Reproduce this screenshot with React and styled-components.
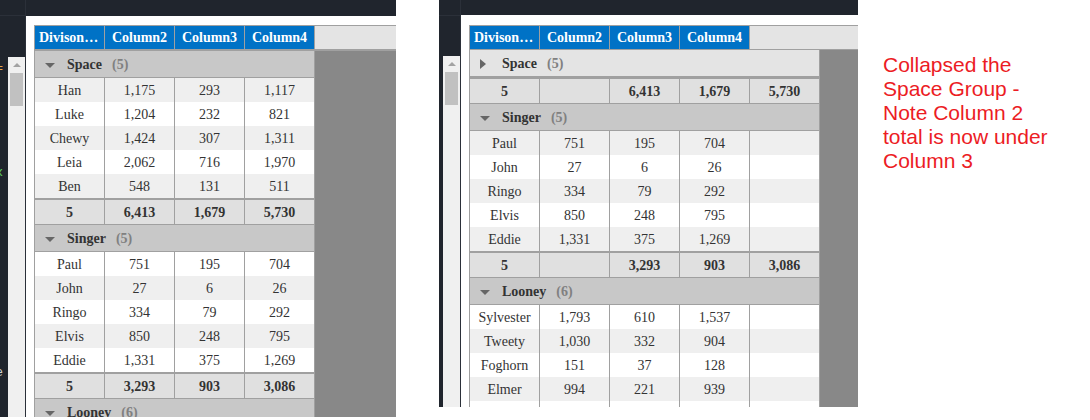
import React from 'react';
import styled, { createGlobalStyle } from 'styled-components';

const Global = createGlobalStyle`
  *, *::before, *::after { box-sizing: border-box; }
  html, body { margin: 0; padding: 0; background: #fff; }
  body {
    width: 1090px;
    height: 420px;
    overflow: hidden;
    font-family: "Liberation Serif", "Times New Roman", serif;
  }
`;

const Page = styled.div`
  display: flex;
  align-items: flex-start;
  height: 420px;
`;

const Shot = styled.div`
  display: flex;
  flex-shrink: 0;
  width: ${(p) => p.$w}px;
  height: ${(p) => p.$h}px;
  margin-right: ${(p) => p.$mr}px;
  overflow: hidden;
`;

const Sidebar = styled.div`
  display: flex;
  flex-direction: column;
  flex-shrink: 0;
  background: #20252d;
  border-right: 1px solid #2b3039;
`;

const SideHead = styled.div`
  height: 16px;
  border-bottom: 1px solid #2b3039;
`;

const SideBody = styled.div`
  flex: 1;
  display: flex;
  min-height: 0;
`;

const CodeStrip = styled.div`
  width: ${(p) => p.$w}px;
  display: flex;
  flex-direction: column;
  overflow: hidden;
  font-family: "Liberation Mono", monospace;
  font-size: 13px;
`;

const CodeLine = styled.div`
  height: 16px;
  line-height: 16px;
  margin-top: ${(p) => p.$gap}px;
  padding-right: 5px;
  display: flex;
  justify-content: flex-end;
  white-space: nowrap;
  color: ${(p) => p.$c};
`;

const ScrollCol = styled.div`
  width: 17px;
  display: flex;
  flex-direction: column;
`;

const ScrollSpacer = styled.div`
  height: ${(p) => p.$h}px;
  flex-shrink: 0;
`;

const Track = styled.div`
  flex: 1;
  background: #f0f0f0;
  display: flex;
  flex-direction: column;
  align-items: center;
  padding-top: 6px;
`;

const TrackArrow = styled.div`
  width: 0;
  height: 0;
  border-left: 4px solid transparent;
  border-right: 4px solid transparent;
  border-bottom: 4px solid #a3a3a3;
`;

const Thumb = styled.div`
  width: 13px;
  height: 33px;
  margin-top: 6px;
  background: #c1c1c1;
`;

const Main = styled.div`
  flex: 1;
  display: flex;
  flex-direction: column;
  min-width: 0;
`;

const TopBar = styled.div`
  height: ${(p) => p.$h}px;
  background: #20252d;
  flex-shrink: 0;
`;

const Content = styled.div`
  flex: 1;
  min-height: 0;
  display: flex;
  flex-direction: column;
  padding: ${(p) => p.$pt}px 0 0 8px;
  background: #fff;
`;

const GridPanel = styled.div`
  flex: 1;
  min-height: 0;
  display: flex;
  flex-direction: column;
  overflow: hidden;
`;

const HeaderBar = styled.div`
  display: flex;
  flex-shrink: 0;
  background: #e4e4e4;
  border-top: 1px solid #a0a0a0;
  border-bottom: ${(p) => p.$bb}px solid #a0a0a0;
`;

const HeaderCells = styled.div`
  display: flex;
  border-left: 1px solid #a0a0a0;
`;

const HeaderCell = styled.div`
  width: 70px;
  height: 23px;
  line-height: 23px;
  padding: 0 4px;
  background: #0072c6;
  color: #fff;
  font-weight: bold;
  font-size: 14px;
  text-align: center;
  white-space: nowrap;
  overflow: hidden;
  text-overflow: ellipsis;
  border-right: 1px solid #a0a0a0;
`;

const Body = styled.div`
  flex: 1;
  min-height: 0;
  display: flex;
  background: #888;
  overflow: hidden;
`;

const Table = styled.div`
  display: flex;
  flex-direction: column;
  flex-shrink: 0;
  border-left: 1px solid #a0a0a0;
`;

const GroupRow = styled.div`
  display: flex;
  align-items: center;
  height: 27px;
  flex-shrink: 0;
  padding: 2px 0 0 10px;
  background: ${(p) => (p.$collapsed ? '#e4e4e4' : '#c8c8c8')};
  border-bottom: 1px solid #a0a0a0;
  border-right: 1px solid #a0a0a0;
  color: #333;
  font-size: 14px;
  font-weight: bold;
`;

const IconBox = styled.div`
  width: 22px;
  display: flex;
  align-items: center;
`;

const ArrowDown = styled.div`
  width: 0;
  height: 0;
  border-left: 5px solid transparent;
  border-right: 5px solid transparent;
  border-top: 5px solid #666;
`;

const ArrowRight = styled.div`
  width: 0;
  height: 0;
  border-top: 5px solid transparent;
  border-bottom: 5px solid transparent;
  border-left: 6px solid #666;
`;

const Count = styled.span`
  margin-left: 10px;
  color: #808080;
`;

const Row = styled.div`
  display: flex;
  flex-shrink: 0;
  background: ${(p) => (p.$total ? '#e0e0e0' : p.$alt ? '#efefef' : '#fff')};
  border-top: ${(p) => (p.$total ? '2px solid #a0a0a0' : 'none')};
  border-bottom: ${(p) => (p.$total ? '1px solid #a0a0a0' : 'none')};
  font-weight: ${(p) => (p.$total ? 'bold' : 'normal')};
`;

const Cell = styled.div`
  width: 70px;
  height: 24px;
  padding-top: 2px;
  line-height: 22px;
  text-align: center;
  color: #333;
  font-size: 14px;
  white-space: nowrap;
  border-right: 1px solid #a0a0a0;
`;

const Note = styled.div`
  margin-top: 53px;
  font-family: "Liberation Sans", Arial, sans-serif;
  font-size: 21px;
  line-height: 24px;
  color: #ec1c24;
`;

const headers = ['Divison Name', 'Column2', 'Column3', 'Column4'];

const groups = [
  {
    name: 'Space',
    rows: [
      ['Han', '1,175', '293', '1,117'],
      ['Luke', '1,204', '232', '821'],
      ['Chewy', '1,424', '307', '1,311'],
      ['Leia', '2,062', '716', '1,970'],
      ['Ben', '548', '131', '511'],
    ],
    total: ['5', '6,413', '1,679', '5,730'],
  },
  {
    name: 'Singer',
    rows: [
      ['Paul', '751', '195', '704'],
      ['John', '27', '6', '26'],
      ['Ringo', '334', '79', '292'],
      ['Elvis', '850', '248', '795'],
      ['Eddie', '1,331', '375', '1,269'],
    ],
    total: ['5', '3,293', '903', '3,086'],
  },
  {
    name: 'Looney',
    rows: [
      ['Sylvester', '1,793', '610', '1,537'],
      ['Tweety', '1,030', '332', '904'],
      ['Foghorn', '151', '37', '128'],
      ['Elmer', '994', '221', '939'],
      ['Bugs', '1,212', '405', '1,020'],
      ['Daffy', '866', '240', '713'],
    ],
    total: ['6', '6,046', '1,845', '5,241'],
  },
];

function Grid({ extraCol, collapsed, headerBorder }) {
  let idx = 0;
  const items = [];
  groups.forEach((g) => {
    const isCollapsed = collapsed.includes(g.name);
    items.push(
      <GroupRow key={g.name} $collapsed={isCollapsed}>
        <IconBox>{isCollapsed ? <ArrowRight /> : <ArrowDown />}</IconBox>
        {g.name}
        <Count>({g.rows.length})</Count>
      </GroupRow>
    );
    if (!isCollapsed) {
      g.rows.forEach((r) => {
        const cells = extraCol ? [...r, ''] : r;
        const alt = idx % 2 === 0;
        idx += 1;
        items.push(
          <Row key={g.name + r[0]} $alt={alt}>
            {cells.map((c, i) => (
              <Cell key={i}>{c}</Cell>
            ))}
          </Row>
        );
      });
    }
    const totals = extraCol ? [g.total[0], '', ...g.total.slice(1)] : g.total;
    items.push(
      <Row key={g.name + '-total'} $total>
        {totals.map((c, i) => (
          <Cell key={i}>{c}</Cell>
        ))}
      </Row>
    );
  });

  return (
    <GridPanel>
      <HeaderBar $bb={headerBorder}>
        <HeaderCells>
          {headers.map((h) => (
            <HeaderCell key={h}>{h}</HeaderCell>
          ))}
        </HeaderCells>
      </HeaderBar>
      <Body>
        <Table>{items}</Table>
      </Body>
    </GridPanel>
  );
}

function Screenshot({ w, h, mr, codeWidth, code, topH, padTop, spacer, grid }) {
  return (
    <Shot $w={w} $h={h} $mr={mr}>
      <Sidebar>
        <SideHead />
        <SideBody>
          <CodeStrip $w={codeWidth}>
            {code.map((l, i) => (
              <CodeLine key={i} $gap={l.gap} $c={l.color}>
                <span>{l.text}</span>
              </CodeLine>
            ))}
          </CodeStrip>
          <ScrollCol>
            <ScrollSpacer $h={spacer} />
            <Track>
              <TrackArrow />
              <Thumb />
            </Track>
          </ScrollCol>
        </SideBody>
      </Sidebar>
      <Main>
        <TopBar $h={topH} />
        <Content $pt={padTop}>{grid}</Content>
      </Main>
    </Shot>
  );
}

const leftCode = [
  { gap: 45, color: '#e5a54b', text: 'value =' },
  { gap: 88, color: '#5fd35f', text: 'return x' },
  { gap: 184, color: '#d4d4d4', text: 'table' },
];

export default function App() {
  return (
    <>
      <Global />
      <Page>
        <Screenshot
          w={396}
          h={417}
          mr={43}
          codeWidth={8}
          code={leftCode}
          topH={16}
          padTop={9}
          spacer={41}
          grid={<Grid extraCol={false} collapsed={[]} headerBorder={2} />}
        />
        <Screenshot
          w={419}
          h={407}
          mr={25}
          codeWidth={4}
          code={[]}
          topH={15}
          padTop={10}
          spacer={40}
          grid={<Grid extraCol collapsed={['Space']} headerBorder={1} />}
        />
        <Note>
          Collapsed the
          <br />
          Space Group -
          <br />
          Note Column 2
          <br />
          total is now under
          <br />
          Column 3
        </Note>
      </Page>
    </>
  );
}
